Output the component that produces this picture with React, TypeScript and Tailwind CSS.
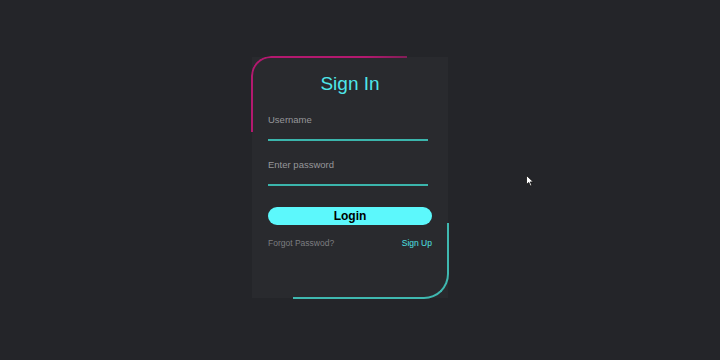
import React from "react";

function Field({ label }: { label: string }) {
  return (
    <div className="w-[160px] h-[28px] border-b-2 border-[#3bb5ac]">
      <span className="block text-[9.5px] leading-[14px] text-[#96979a]">{label}</span>
    </div>
  );
}

export default function App() {
  return (
    <div
      className="relative w-[720px] h-[360px] overflow-hidden bg-[#242529] pt-[57px] pl-[252px]"
      style={{ fontFamily: '"Liberation Sans", Arial, sans-serif' }}
    >
      {/* Card */}
      <div className="relative w-[196px] h-[241px] bg-[#292a2e]">
        {/* pink corner stroke */}
        <div className="absolute -left-px -top-px w-[156px] h-[76px] rounded-tl-[20px] border-t-2 border-l-2 border-[#b3196f] [mask-image:linear-gradient(135deg,#000_50%,transparent_100%)]" />
        {/* cyan corner stroke */}
        <div className="absolute -right-px -bottom-px w-[156px] h-[76px] rounded-br-[25px] border-b-2 border-r-2 border-[#3fb8b0]" />

        <div className="relative flex flex-col px-4 pt-[13px]">
          <h1 className="text-center text-[19px] leading-[28px] text-[#4ee6ea]">Sign In</h1>

          <div className="mt-[15px] flex flex-col gap-[17px]">
            <Field label="Username" />
            <Field label="Enter password" />
          </div>

          <button className="mt-[21px] h-[18px] w-full rounded-full bg-[#5cf8fc] text-[12px] font-bold leading-[18px] text-black">
            Login
          </button>

          <div className="mt-[12px] flex items-center justify-between text-[8.5px] leading-[12px]">
            <span className="text-[#7c7d80]">Forgot Passwod?</span>
            <span className="text-[#4ee0e3]">Sign Up</span>
          </div>
        </div>
      </div>

      {/* mouse pointer */}
      <svg className="absolute left-[526px] top-[175px]" width="8" height="12" viewBox="0 0 8 12">
        <path d="M0.5 0.5 L0.5 9.5 L2.8 7.4 L4.4 11 L5.8 10.4 L4.3 6.9 L7.3 6.9 Z" fill="#fff" stroke="#111" strokeWidth="0.8" />
      </svg>
    </div>
  );
}
